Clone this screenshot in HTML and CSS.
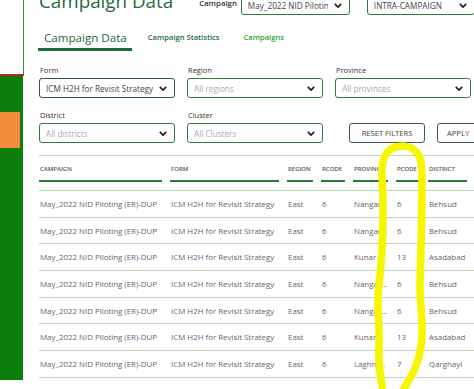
FILE: index.html
```html
<!DOCTYPE html>
<html lang="en">

<head>
  <meta charset="utf-8" />
  <meta name="viewport" content="width=device-width, initial-scale=1" />
  <title>Campaign Data</title>
  <link rel="stylesheet" href="styles.css">
</head>

<body>
  <div id="layout">
    <aside class="sidebar">
      <div class="side-top"></div>
      <div class="side-nav">
        <div class="side-active"></div>
      </div>
    </aside>

    <main class="content">
      <header class="page-head">
        <h1>Campaign Data</h1>
        <div class="head-filters">
          <span class="head-label">Campaign</span>
          <div class="select head-select first">
            <span class="value">May_2022 NID Piloting (ER)-DUP</span>
            <svg class="chevron" viewBox="0 0 10 6"><polyline points="1,1 5,5 9,1" /></svg>
          </div>
          <div class="select head-select second">
            <span class="value">INTRA-CAMPAIGN</span>
            <svg class="chevron" viewBox="0 0 10 6"><polyline points="1,1 5,5 9,1" /></svg>
          </div>
        </div>
      </header>

      <nav class="tabs">
        <a class="tab active">Campaign Data</a>
        <a class="tab">Campaign Statistics</a>
        <a class="tab link">Campaigns</a>
      </nav>

      <section class="filters">
        <div class="field">
          <label>Form</label>
          <div class="select dark">
            <span class="value">ICM H2H for Revisit Strategy</span>
            <svg class="chevron" viewBox="0 0 10 6"><polyline points="1,1 5,5 9,1" /></svg>
          </div>
        </div>
        <div class="field">
          <label>Region</label>
          <div class="select">
            <span class="value empty">All regions</span>
            <svg class="chevron" viewBox="0 0 10 6"><polyline points="1,1 5,5 9,1" /></svg>
          </div>
        </div>
        <div class="field">
          <label>Province</label>
          <div class="select">
            <span class="value empty">All provinces</span>
            <svg class="chevron" viewBox="0 0 10 6"><polyline points="1,1 5,5 9,1" /></svg>
          </div>
        </div>
        <div class="field">
          <label>District</label>
          <div class="select">
            <span class="value empty">All districts</span>
            <svg class="chevron" viewBox="0 0 10 6"><polyline points="1,1 5,5 9,1" /></svg>
          </div>
        </div>
        <div class="field">
          <label>Cluster</label>
          <div class="select">
            <span class="value empty">All Clusters</span>
            <svg class="chevron" viewBox="0 0 10 6"><polyline points="1,1 5,5 9,1" /></svg>
          </div>
        </div>
        <div class="actions">
          <button type="button">Reset filters</button>
          <button type="button">Apply</button>
        </div>
      </section>

      <table class="data">
        <colgroup>
          <col style="width: 131px">
          <col style="width: 117px">
          <col style="width: 34px">
          <col style="width: 32px">
          <col style="width: 43px">
          <col style="width: 32px">
          <col style="width: 46px">
        </colgroup>
        <thead>
          <tr>
            <th><span>Campaign</span></th>
            <th><span>Form</span></th>
            <th><span>Region</span></th>
            <th><span>Rcode</span></th>
            <th><span>Province</span></th>
            <th><span>Pcode</span></th>
            <th><span>District</span></th>
          </tr>
        </thead>
        <tbody id="rows"></tbody>
      </table>
    </main>
  </div>

  <!-- Freehand highlighter mark drawn over the PCODE column. -->
  <svg class="marker" viewBox="0 0 474 389">
    <path d="M384 398 C381 380, 378 365, 379 345 C380 320, 376 305, 379 285 C383 250, 384 210, 382 175 C381 150, 393 146, 403 146 C417 147, 422 156, 422 175 C422 210, 421 250, 420 285 C420 310, 425 330, 420 352 C417 368, 410 378, 402 392" />
  </svg>

  <script>
    const data = [
      ['Nangarhar', '6', 'Behsud'],
      ['Nangarhar', '6', 'Behsud'],
      ['Kunar', '13', 'Asadabad'],
      ['Nangarhar', '6', 'Behsud'],
      ['Nangarhar', '6', 'Behsud'],
      ['Kunar', '13', 'Asadabad'],
      ['Laghman', '7', 'Qarghayi'],
    ];

    const tbody = document.getElementById('rows');
    data.forEach(([province, pcode, district]) => {
      const tr = document.createElement('tr');
      [
        'May_2022 NID Piloting (ER)-DUP',
        'ICM H2H for Revisit Strategy',
        'East',
        '6',
        province,
        pcode,
        district,
      ].forEach((text) => {
        const td = document.createElement('td');
        td.textContent = text;
        tr.appendChild(td);
      });
      tbody.appendChild(tr);
    });
  </script>
</body>

</html>
```

FILE: styles.css
```css
html,
body {
  margin: 0;
  padding: 0;
  background: #fff;
}

body {
  font-family: 'Open Sans', 'Liberation Sans', sans-serif;
  color: #555;
  width: 474px;
  height: 389px;
  overflow: hidden;
  position: relative;
}

#layout {
  display: flex;
  align-items: flex-start;
}

/* Left navigation strip */

.sidebar {
  width: 24px;
  flex: none;
  display: flex;
  flex-direction: column;
}

.side-top {
  height: 74px;
  border-right: 1px solid #2f8a3c;
  border-bottom: 2px solid #a8321f;
}

.side-nav {
  height: 304px;
  width: 23px;
  background-color: #0b7e0c;
  padding-top: 36px;
  box-sizing: border-box;
}

.side-active {
  width: 20px;
  height: 36px;
  background-color: #f28d3a;
}

/* Main column */

.content {
  flex: 1;
  padding-left: 15px;
  margin-top: -16px;
}

.page-head {
  display: flex;
  align-items: flex-start;
  height: 30px;
}

.page-head h1 {
  margin: 0;
  font-size: 18.8px;
  font-weight: 500;
  color: #1e6a3d;
  line-height: 26px;
  padding-top: 4px;
  white-space: nowrap;
}

.head-filters {
  display: flex;
  align-items: center;
  margin-left: 26px;
  padding-top: 11px;
}

.head-label {
  font-size: 7.8px;
  font-weight: 600;
  color: #333;
  margin-right: 4px;
  margin-top: -5px;
}

.head-select.first {
  width: 109px;
}

.head-select.second {
  width: 108px;
  margin-left: 17px;
  flex: none;
}

/* Tabs */

.tabs {
  display: flex;
  align-items: flex-end;
  margin-top: 13px;
  height: 24px;
}

.tab {
  font-size: 7.6px;
  font-weight: 600;
  color: #1e6a3d;
  line-height: 21px;
  padding: 0 6px;
  margin-right: 10px;
  border-bottom: 3px solid transparent;
  white-space: nowrap;
}

.tab.active {
  font-size: 11.6px;
  font-weight: 500;
  border-bottom-color: #1e6a3d;
  padding: 0 5px 0 6px;
  margin-left: -1px;
}

.tab.link {
  color: #2ea52c;
  margin-left: 2px;
}

/* Filter grid */

.filters {
  display: grid;
  grid-template-columns: repeat(3, 136px);
  column-gap: 12px;
  row-gap: 12px;
  margin-top: 14px;
}

.field label {
  display: block;
  font-size: 7.5px;
  color: #333;
  line-height: 11px;
  margin-bottom: 2px;
  padding-left: 1px;
}

.select {
  height: 20px;
  box-sizing: border-box;
  border: 1.5px solid #2f7d3c;
  border-radius: 3px;
  display: flex;
  align-items: center;
  padding: 0 7px 0 6px;
  background: #fff;
}

.select.dark {
  border-color: #2d5a3b;
}

.select .value {
  flex: 1;
  font-size: 8.2px;
  color: #444;
  white-space: nowrap;
  overflow: hidden;
}

.select .value.empty {
  color: #aaa;
}

.chevron {
  width: 8px;
  height: 5px;
  flex: none;
  margin-left: 6px;
  fill: none;
  stroke: #222;
  stroke-width: 2.2;
}

.actions {
  display: flex;
  align-self: end;
  gap: 12px;
  padding-left: 14px;
}

.actions button {
  height: 20px;
  box-sizing: border-box;
  flex: none;
  background: #fff;
  border: 1px solid #3b5f46;
  border-radius: 3px;
  font-family: inherit;
  font-size: 7.6px;
  color: #444;
  text-transform: uppercase;
  padding: 0 9px;
  width: 76px;
}

.actions button + button {
  width: 60px;
  text-align: left;
}

/* Data table */

.data {
  margin-top: 12px;
  border-collapse: collapse;
  table-layout: fixed;
  width: 435px;
}

.data th {
  border-top: 1px solid #b9d6b5;
  border-bottom: 1px solid #b9d6b5;
  padding: 8px 8px 8px 0;
  text-align: left;
}

.data th span {
  display: block;
  font-size: 6px;
  font-weight: 600;
  color: #555;
  text-transform: uppercase;
  line-height: 10px;
  padding: 0 0 6px 1px;
  border-bottom: 2px solid #2b7a3a;
  white-space: nowrap;
}

.data th:last-child {
  padding-right: 7px;
}

.data td {
  height: 25.7px;
  padding: 0 8px 0 1px;
  font-size: 7.9px;
  color: #666;
  border-bottom: 1px solid #b9d6b5;
  white-space: nowrap;
  overflow: hidden;
  text-overflow: ellipsis;
}

/* Highlighter mark */

.marker {
  position: absolute;
  top: 0;
  left: 0;
  width: 474px;
  height: 389px;
  pointer-events: none;
}

.marker path {
  fill: none;
  stroke: #f6f600;
  stroke-width: 7.5;
  stroke-linecap: round;
  stroke-linejoin: round;
}
```
